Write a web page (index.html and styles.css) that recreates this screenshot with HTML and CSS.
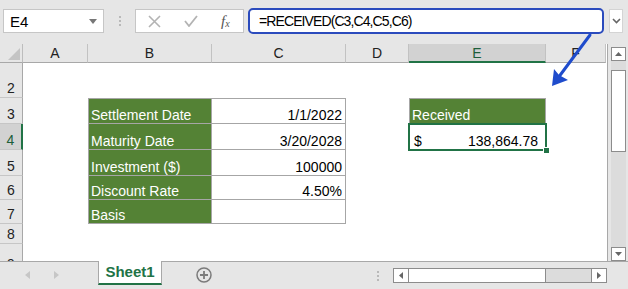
FILE: index.html
```html
<!DOCTYPE html>
<html lang="en">
<head>
<meta charset="UTF-8">
<title>RECEIVED function</title>
<link rel="stylesheet" href="styles.css">
</head>
<body>

<div class="toolbar">
<div class="namebox">
<span>E4</span>
<svg class="caret" width="8" height="5" viewBox="0 0 8 5"><path d="M0 0h8L4 5z" fill="#777"/></svg>
</div>
<div class="grip"><i></i><i></i><i></i></div>
<div class="fbtns">
<svg width="13" height="13" viewBox="0 0 13 13"><path d="M1 1l11 11M12 1L1 12" stroke="#b3b3b3" stroke-width="1.6"/></svg>
<svg width="14" height="12" viewBox="0 0 14 12"><path d="M1 6l4 5L13 1" stroke="#b3b3b3" stroke-width="1.8" fill="none"/></svg>
<span class="fx">f<sub>x</sub></span>
</div>
<div class="formula">=RECEIVED(C3,C4,C5,C6)</div>
<div class="expand">
<svg width="9" height="6" viewBox="0 0 9 6"><path d="M1 1l3.5 3.5L8 1" stroke="#666" stroke-width="1.6" fill="none"/></svg>
</div>
</div>

<div class="main">
<div class="grid">
<div class="corner"><svg width="12" height="12" viewBox="0 0 12 12"><path d="M12 0v12H0z" fill="#c4c4c4"/></svg></div>
<div class="ch">A</div><div class="ch">B</div><div class="ch">C</div><div class="ch">D</div><div class="ch sel">E</div><div class="ch">F</div>

<div class="rh">2</div><div class="c"></div><div class="c"></div><div class="c"></div><div class="c"></div><div class="c"></div><div class="c"></div>

<div class="rh">3</div><div class="c"></div>
<div class="lbl top">Settlement Date</div><div class="val top">1/1/2022</div>
<div class="c"></div><div class="lbl out">Received</div><div class="c"></div>

<div class="rh sel">4</div><div class="c"></div>
<div class="lbl">Maturity Date</div><div class="val">3/20/2028</div>
<div class="c"></div><div class="c cur"><span>$</span><span>138,864.78</span></div><div class="c"></div>

<div class="rh">5</div><div class="c"></div>
<div class="lbl">Investment ($)</div><div class="val">100000</div>
<div class="c"></div><div class="c"></div><div class="c"></div>

<div class="rh">6</div><div class="c"></div>
<div class="lbl">Discount Rate</div><div class="val">4.50%</div>
<div class="c"></div><div class="c"></div><div class="c"></div>

<div class="rh">7</div><div class="c"></div>
<div class="lbl">Basis</div><div class="val"></div>
<div class="c"></div><div class="c"></div><div class="c"></div>

<div class="rh">8</div><div class="c"></div><div class="c"></div><div class="c"></div><div class="c"></div><div class="c"></div><div class="c"></div>

<div class="rh cut">9</div><div class="c"></div><div class="c"></div><div class="c"></div><div class="c"></div><div class="c"></div><div class="c"></div>
</div>

<div class="vscroll">
<div class="sbtn"><svg width="7" height="4" viewBox="0 0 7 4"><path d="M0 4h7L3.5 0z" fill="#666"/></svg></div>
<div class="track"><div class="thumb"></div></div>
<div class="sbtn"><svg width="7" height="4" viewBox="0 0 7 4"><path d="M0 0h7L3.5 4z" fill="#666"/></svg></div>
</div>
</div>

<div class="tabbar">
<div class="nav">
<svg width="5" height="8" viewBox="0 0 5 8"><path d="M5 0v8L0 4z" fill="#c6c6c6"/></svg>
<svg width="5" height="8" viewBox="0 0 5 8"><path d="M0 0v8l5-4z" fill="#c6c6c6"/></svg>
</div>
<div class="tab">Sheet1</div>
<svg class="add" width="16" height="16" viewBox="0 0 16 16"><circle cx="8" cy="8" r="7" fill="none" stroke="#7b7b7b" stroke-width="1.5"/><path d="M8 4v8M4 8h8" stroke="#7b7b7b" stroke-width="1.8"/></svg>
<div class="grip low"><i></i><i></i><i></i></div>
<div class="hscroll">
<div class="hbtn"><svg width="4" height="7" viewBox="0 0 4 7"><path d="M4 0v7L0 3.5z" fill="#666"/></svg></div>
<div class="hthumb"></div>
<div class="htrack"></div>
<div class="hbtn"><svg width="4" height="7" viewBox="0 0 4 7"><path d="M0 0v7l4-3.5z" fill="#666"/></svg></div>
</div>
</div>

<!-- arrow pointing from the formula bar to the result -->
<svg class="arrow" width="628" height="289" viewBox="0 0 628 289">
<path d="M590 35L558 78" stroke="#1f4ccc" stroke-width="3" stroke-linecap="round"/>
<path d="M552 86L554 69L559 75L568 80z" fill="#1f4ccc"/>
</svg>

</body>
</html>
```

FILE: styles.css
```css
* {
box-sizing: border-box;
}

body {
margin: 0;
width: 628px;
height: 289px;
overflow: hidden;
position: relative;
background-color: #e6e6e6;
font-family: "Liberation Sans", Arial, sans-serif;
font-size: 14px;
color: #000;
}

.toolbar {
height: 44px;
display: flex;
align-items: flex-start;
padding-top: 9px;
}

.namebox {
margin-left: 3px;
width: 101px;
height: 24px;
background-color: #fff;
border: 1px solid #c6c6c6;
display: flex;
align-items: center;
justify-content: space-between;
padding: 0 6px 0 6px;
font-size: 15px;
}

.grip {
margin-left: 15px;
width: 3px;
height: 24px;
display: flex;
flex-direction: column;
justify-content: center;
gap: 2px;
}

.grip i {
display: block;
width: 2px;
height: 2px;
background-color: #b9b9b9;
}

.fbtns {
margin-left: 13px;
width: 109px;
height: 24px;
background-color: #fff;
border: 1px solid #c6c6c6;
display: flex;
align-items: center;
padding-left: 12px;
gap: 23px;
}

.fx {
font-family: "Liberation Serif", serif;
font-style: italic;
font-size: 15px;
color: #555;
}

.fx sub {
font-size: 10px;
vertical-align: -1px;
}

.formula {
margin-left: 4px;
margin-top: -1px;
width: 356px;
height: 26px;
background-color: #fff;
border: 2px solid #2b4bbd;
border-radius: 5px;
padding-left: 9px;
display: flex;
align-items: center;
font-size: 14px;
letter-spacing: -0.9px;
}

.expand {
margin-left: 5px;
width: 14px;
height: 24px;
background-color: #fff;
border: 1px solid #d4d4d4;
display: flex;
align-items: center;
justify-content: center;
}

.main {
display: flex;
height: 217px;
}

.grid {
width: 608px;
background-color: #fff;
border-right: 1px solid #a8a8a8;
display: grid;
grid-template-columns: 23px 65px 124px 134px 63px 137px 60px;
grid-template-rows: 19px 35px 26px 26px 26px 24px 24px 20px 17px;
overflow: hidden;
}

.corner {
background-color: #e6e6e6;
border-right: 1px solid #bdbdbd;
border-bottom: 1px solid #a8a8a8;
padding: 4px 0 0 8px;
}

.corner svg {
display: block;
}

.ch {
background-color: #e6e6e6;
border-right: 1px solid #c2c2c2;
border-bottom: 1px solid #a8a8a8;
text-align: center;
line-height: 18px;
color: #222;
}

.ch.sel {
background-color: #d2d2d2;
color: #1d5e3a;
border-bottom: 2px solid #217346;
}

.rh {
background-color: #e6e6e6;
border-right: 1px solid #a8a8a8;
border-bottom: 1px solid #c6c6c6;
display: flex;
align-items: flex-end;
justify-content: center;
line-height: 15px;
padding-bottom: 1px;
color: #222;
}

.rh.sel {
background-color: #d2d2d2;
color: #1d5e3a;
border-right: 2px solid #217346;
}

.rh.cut {
align-items: flex-start;
padding-top: 13px;
border-bottom: 0;
}

.c, .lbl, .val {
display: flex;
align-items: flex-end;
padding: 0 3px 0 2px;
white-space: nowrap;
line-height: 15px;
}

.lbl {
background-color: #548235;
color: #fff;
border-right: 1px solid #a6a6a6;
border-bottom: 1px solid #a6a6a6;
border-left: 1px solid #a6a6a6;
}

.val {
justify-content: flex-end;
border-right: 1px solid #a6a6a6;
border-bottom: 1px solid #a6a6a6;
}

.top {
border-top: 1px solid #a6a6a6;
}

.lbl.out {
border: 1px solid #a6a6a6;
}

.cur {
position: relative;
justify-content: space-between;
padding: 0 8px 1px 5px;
}

.cur::before {
content: "";
position: absolute;
inset: -1px;
border: 2px solid #217346;
}

.cur::after {
content: "";
position: absolute;
right: -4px;
bottom: -4px;
width: 5px;
height: 5px;
background-color: #217346;
border: 1px solid #fff;
box-sizing: content-box;
}

.vscroll {
width: 20px;
padding: 3px 2px 0 3px;
display: flex;
flex-direction: column;
}

.sbtn {
height: 14px;
background-color: #fff;
border: 1px solid #8c8c8c;
display: flex;
align-items: center;
justify-content: center;
}

.track {
flex: 1;
background-color: #dcdcdc;
padding-top: 9px;
}

.thumb {
height: 82px;
background-color: #fff;
border: 1px solid #8c8c8c;
}

.tabbar {
height: 28px;
border-top: 1px solid #a8a8a8;
display: flex;
align-items: flex-start;
}

.nav {
width: 98px;
height: 26px;
display: flex;
align-items: center;
padding-left: 25px;
gap: 24px;
}

.tab {
width: 64px;
height: 24px;
background-color: #fff;
border-left: 1px solid #a8a8a8;
border-right: 1px solid #a8a8a8;
border-bottom: 2px solid #217346;
margin-top: -1px;
text-align: center;
line-height: 22px;
font-size: 15px;
font-weight: bold;
color: #217346;
}

.add {
margin: 5px 0 0 34px;
}

.grip.low {
margin: 7px 0 0 165px;
height: 13px;
}

.hscroll {
margin: 6px 0 0 13px;
width: 214px;
height: 15px;
display: flex;
border: 1px solid #8c8c8c;
background-color: #dcdcdc;
}

.hbtn {
width: 14px;
background-color: #fff;
display: flex;
align-items: center;
justify-content: center;
}

.hthumb {
width: 138px;
background-color: #fff;
border-left: 1px solid #8c8c8c;
border-right: 1px solid #8c8c8c;
}

.htrack {
flex: 1;
border-right: 1px solid #8c8c8c;
}

.arrow {
position: absolute;
left: 0;
top: 0;
pointer-events: none;
}
```
